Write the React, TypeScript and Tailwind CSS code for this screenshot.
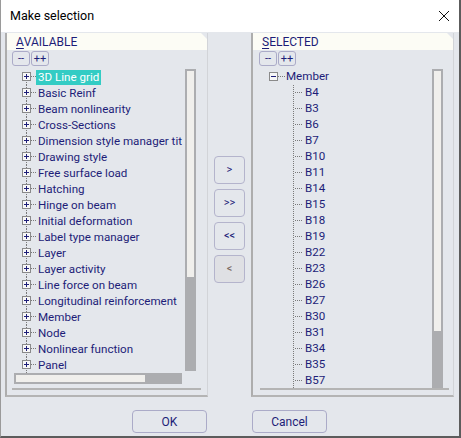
import React from "react";

const FONT = { fontFamily: "Roboto, 'Noto Sans', sans-serif" };

const available = [
  "3D Line grid",
  "Basic Reinf",
  "Beam nonlinearity",
  "Cross-Sections",
  "Dimension style manager tit",
  "Drawing style",
  "Free surface load",
  "Hatching",
  "Hinge on beam",
  "Initial deformation",
  "Label type manager",
  "Layer",
  "Layer activity",
  "Line force on beam",
  "Longitudinal reinforcement",
  "Member",
  "Node",
  "Nonlinear function",
  "Panel",
];

const selected = [
  "B4", "B3", "B6", "B7", "B10", "B11", "B14", "B15", "B18", "B19",
  "B22", "B23", "B26", "B27", "B30", "B31", "B34", "B35", "B57",
];

// expander box (+ or -) with tree connectors
function Expander({ plus, first, width }: { plus: boolean; first?: boolean; width: number }) {
  return (
    <svg width={width} height={16} className="shrink-0">
      {plus && (
        <>
          {!first && <line x1={8.5} y1={0} x2={8.5} y2={3} stroke="#7a7a7a" strokeDasharray="1 1" />}
          <line x1={8.5} y1={13} x2={8.5} y2={16} stroke="#7a7a7a" strokeDasharray="1 1" />
        </>
      )}
      <rect x={4.5} y={3.5} width={8} height={8} fill="#f7f7f7" stroke="#8a8a8a" />
      <line x1={6} y1={7.5} x2={11} y2={7.5} stroke="#1d1d78" />
      {plus && <line x1={8.5} y1={5} x2={8.5} y2={10} stroke="#1d1d78" />}
      <line x1={13} y1={7.5} x2={width} y2={7.5} stroke="#7a7a7a" strokeDasharray="1 1" />
    </svg>
  );
}

function Leaf() {
  return (
    <svg width={20} height={16} className="shrink-0">
      <line x1={8.5} y1={0} x2={8.5} y2={16} stroke="#7a7a7a" strokeDasharray="1 1" />
      <line x1={10} y1={7.5} x2={18} y2={7.5} stroke="#7a7a7a" strokeDasharray="1 1" />
    </svg>
  );
}

function SmallBtn({ label }: { label: string }) {
  return (
    <div className="w-[18px] h-[15px] rounded-[3px] border border-[#ababc8] flex items-center justify-center text-[11px] leading-none text-[#1d1d78]">
      {label}
    </div>
  );
}

function Header({ first, rest }: { first: string; rest: string }) {
  return (
    <div className="h-[17px] pl-[9px] bg-[#fcfcf5] [clip-path:polygon(0_0,calc(100%-6px)_0,100%_6px,100%_100%,0_100%)] flex items-center text-[12px] text-[#1d1d78]">
      <span className="underline underline-offset-2">{first}</span>
      <span>{rest}</span>
    </div>
  );
}

function VScroll({ h, thumb }: { h: string; thumb: string }) {
  return (
    <div className={`w-[11px] ${h} bg-[#acadb0] shrink-0 px-[2px] pt-[2px]`}>
      <div className={`w-full ${thumb} bg-[#f0efec]`} />
    </div>
  );
}

function MoveBtn({ label, disabled }: { label: string; disabled?: boolean }) {
  return (
    <div
      className={`w-[31px] h-[28px] rounded-[4px] border border-[#b4b4cc] flex items-center justify-center text-[11px] ${
        disabled ? "bg-[#dfe0e4] text-[#7a6a60]" : "text-[#1d1d78]"
      }`}
    >
      {label}
    </div>
  );
}

export default function App() {
  return (
    <div
      style={FONT}
      className="w-[461px] h-[438px] flex flex-col bg-[#e4e7ec] border-l border-l-[#9a9a9a] border-r-2 border-r-[#5c5c5c] border-b-2 border-b-[#5c5c5c] overflow-hidden"
    >
      {/* Title bar */}
      <div className="h-[32px] bg-white flex items-center justify-between pl-[9px] pr-[9px] shrink-0">
        <span className="text-[12.5px] text-black">Make selection</span>
        <svg width={12} height={12}>
          <line x1={1} y1={1} x2={11} y2={11} stroke="#111" strokeWidth={1} />
          <line x1={11} y1={1} x2={1} y2={11} stroke="#111" strokeWidth={1} />
        </svg>
      </div>

      <div className="flex pl-[4px] pt-[1px]">
        {/* Available panel */}
        <div className="w-[203px] h-[364px] flex flex-col border-l-2 border-l-[#adadad] border-r border-r-[#d2d4d8] border-b-2 border-b-[#b4b4b4]">
          <Header first="A" rest="VAILABLE" />
          <div className="mt-[1px] h-[15px] pl-[5px] flex gap-[1px]">
            <SmallBtn label="--" />
            <SmallBtn label="++" />
          </div>
          <div className="mt-[3px] flex h-[304px]">
            <div className="w-[178px] h-[304px] overflow-hidden pl-[11px]">
              {available.map((t, i) => (
                <div key={t} className="h-[16px] flex items-center whitespace-nowrap text-[11.6px] text-[#1d1d78]">
                  <Expander plus first={i === 0} width={18} />
                  <span
                    className={`px-[2px] h-[15px] leading-[15px] ${
                      i === 0 ? "bg-[#33ccc4] text-white" : ""
                    }`}
                  >
                    {t}
                  </span>
                </div>
              ))}
            </div>
            <VScroll h="h-[302px]" thumb="h-[206px]" />
          </div>
          <div className="ml-[7px] w-[168px] h-[11px] bg-[#acadb0] p-[2px]">
            <div className="w-[129px] h-full bg-[#f0efec]" />
          </div>
          <div className="mt-[4px] ml-[5px] w-[189px] h-[2px] bg-[#b4b4b4]" />
        </div>

        {/* Move buttons */}
        <div className="w-[43px] pl-[6px] pt-[123px] flex flex-col gap-[5px]">
          <MoveBtn label=">" />
          <MoveBtn label=">>" />
          <MoveBtn label="<<" />
          <MoveBtn label="<" disabled />
        </div>

        {/* Selected panel */}
        <div className="w-[203px] h-[364px] flex flex-col border-l-2 border-l-[#adadad] border-r border-r-[#d2d4d8] border-b-2 border-b-[#b4b4b4]">
          <Header first="S" rest="ELECTED" />
          <div className="mt-[1px] h-[15px] pl-[6px] flex gap-[1px]">
            <SmallBtn label="--" />
            <SmallBtn label="++" />
          </div>
          <div className="mt-[3px] flex h-[319px]">
            <div className="w-[179px] h-[319px] overflow-hidden">
              <div className="h-[16px] pl-[12px] flex items-center whitespace-nowrap text-[11.6px] text-[#1d1d78]">
                <Expander plus={false} width={21} />
                <span>Member</span>
              </div>
              {selected.map((t) => (
                <div key={t} className="h-[16px] pl-[32px] flex items-center whitespace-nowrap text-[11.6px] text-[#1d1d78]">
                  <Leaf />
                  <span>{t}</span>
                </div>
              ))}
            </div>
            <VScroll h="h-[319px]" thumb="h-[260px]" />
          </div>
          <div className="ml-[7px] w-[189px] h-[2px] bg-[#b4b4b4]" />
        </div>
      </div>

      {/* Bottom buttons */}
      <div className="mt-[13px] flex pl-[131px] gap-[45px]">
        <div className="w-[75px] h-[23px] rounded-[4px] border border-[#ababc8] flex items-center justify-center text-[12px] text-[#1d1d78]">
          OK
        </div>
        <div className="w-[75px] h-[23px] rounded-[4px] border border-[#ababc8] flex items-center justify-center text-[12px] text-[#1d1d78]">
          Cancel
        </div>
      </div>
    </div>
  );
}
